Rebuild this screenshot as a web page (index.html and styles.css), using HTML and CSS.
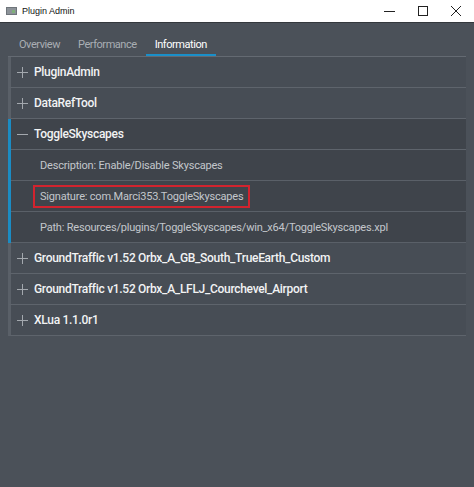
FILE: index.html
```html
<!DOCTYPE html>
<html>
<head>
<meta name="viewport" content="width=device-width, initial-scale=1">
<link rel="stylesheet" href="styles.css">
</head>
<body>

<div class="titlebar">
  <span class="appicon"><span class="appicon-dot"></span></span>
  <span class="title">Plugin Admin</span>
  <div class="controls">
    <svg width="14" height="14" viewBox="0 0 14 14"><path d="M1 7.5h11" stroke="#222" stroke-width="1"/></svg>
    <svg width="14" height="14" viewBox="0 0 14 14"><rect x="2.5" y="2.5" width="9" height="9" fill="none" stroke="#222" stroke-width="1"/></svg>
    <svg width="14" height="14" viewBox="0 0 14 14"><path d="M2 2l10 10M12 2L2 12" stroke="#222" stroke-width="1"/></svg>
  </div>
</div>

<div class="tabs">
  <span class="tab">Overview</span>
  <span class="tab">Performance</span>
  <span class="tab active">Information</span>
</div>

<div class="panel">
  <div class="row"><span class="plus"></span>PluginAdmin</div>
  <div class="row"><span class="plus"></span>DataRefTool</div>
  <div class="group">
    <div class="row open"><span class="minus"></span>ToggleSkyscapes</div>
    <div class="detail">Description: Enable/Disable Skyscapes</div>
    <div class="detail"><span class="marked">Signature: com.Marci353.ToggleSkyscapes</span></div>
    <div class="detail">Path: Resources/plugins/ToggleSkyscapes/win_x64/ToggleSkyscapes.xpl</div>
  </div>
  <div class="row"><span class="plus"></span>GroundTraffic v1.52 Orbx_A_GB_South_TrueEarth_Custom</div>
  <div class="row"><span class="plus"></span>GroundTraffic v1.52 Orbx_A_LFLJ_Courchevel_Airport</div>
  <div class="row"><span class="plus"></span>XLua 1.1.0r1</div>
</div>

</body>
</html>
```

FILE: styles.css
```css
* {box-sizing: border-box;}

body {
  margin: 0;
  height: 487px;
  background-color: #4b5159;
  font-family: Roboto, "Noto Sans", sans-serif;
  overflow: hidden;
}

.titlebar {
  height: 23px;
  background-color: #ffffff;
  border-bottom: 1px solid #34383d;
  display: flex;
  align-items: center;
  padding-left: 6px;
  font-family: "Liberation Sans", Arial, sans-serif;
  font-size: 9px;
  color: #111;
}

.appicon {
  width: 11px;
  height: 8px;
  background-color: #8d9399;
  border: 1px solid #6f757b;
  margin-right: 5px;
  position: relative;
}

.appicon-dot {
  position: absolute;
  right: 1px;
  bottom: 1px;
  width: 3px;
  height: 3px;
  background-color: #7fb07a;
}

.controls {
  margin-left: auto;
  display: flex;
  gap: 19px;
  padding-right: 11px;
}

.tabs {
  display: flex;
  padding: 15px 0 0 10px;
  height: 33px;
}

.tab {
  font-size: 11px;
  letter-spacing: -0.45px;
  line-height: 14px;
  padding: 0 9px;
  color: #a9aeb4;
  border-bottom: 2px solid transparent;
}

.tab.active {
  color: #ffffff;
  border-bottom-color: #1a8fc9;
}

.panel {
  margin: 0 8px;
  border-top: 1px solid #646a72;
}

.row {
  height: 31px;
  display: flex;
  align-items: center;
  padding-left: 6px;
  border-left: 3px solid #5a6068;
  border-bottom: 1px solid #5e646c;
  background-color: #474d55;
  color: #f2f3f4;
  font-size: 12px;
  letter-spacing: -0.3px;
  font-weight: 500;
}

.plus, .minus {
  width: 11px;
  height: 11px;
  margin-right: 6px;
  position: relative;
}

.plus::before, .minus::before {
  content: "";
  position: absolute;
  left: 0;
  top: 5px;
  width: 11px;
  height: 1px;
  background-color: #a3a8ae;
}

.plus::after {
  content: "";
  position: absolute;
  left: 5px;
  top: 0;
  width: 1px;
  height: 11px;
  background-color: #a3a8ae;
}

.group {
  border-left: 3px solid #1b8cc4;
  background-color: #3f444b;
}

.group .row {
  border-left: none;
  background-color: #3f444b;
  padding-left: 6px;
}

.detail {
  height: 31px;
  display: flex;
  align-items: center;
  padding-left: 29px;
  border-bottom: 1px solid #5a6068;
  color: #c3c7cb;
  font-size: 11px;
  letter-spacing: -0.2px;
}

.marked {
  border: 2px solid #d2232e;
  padding: 3px 5px;
  margin-left: -7px;
}
```
